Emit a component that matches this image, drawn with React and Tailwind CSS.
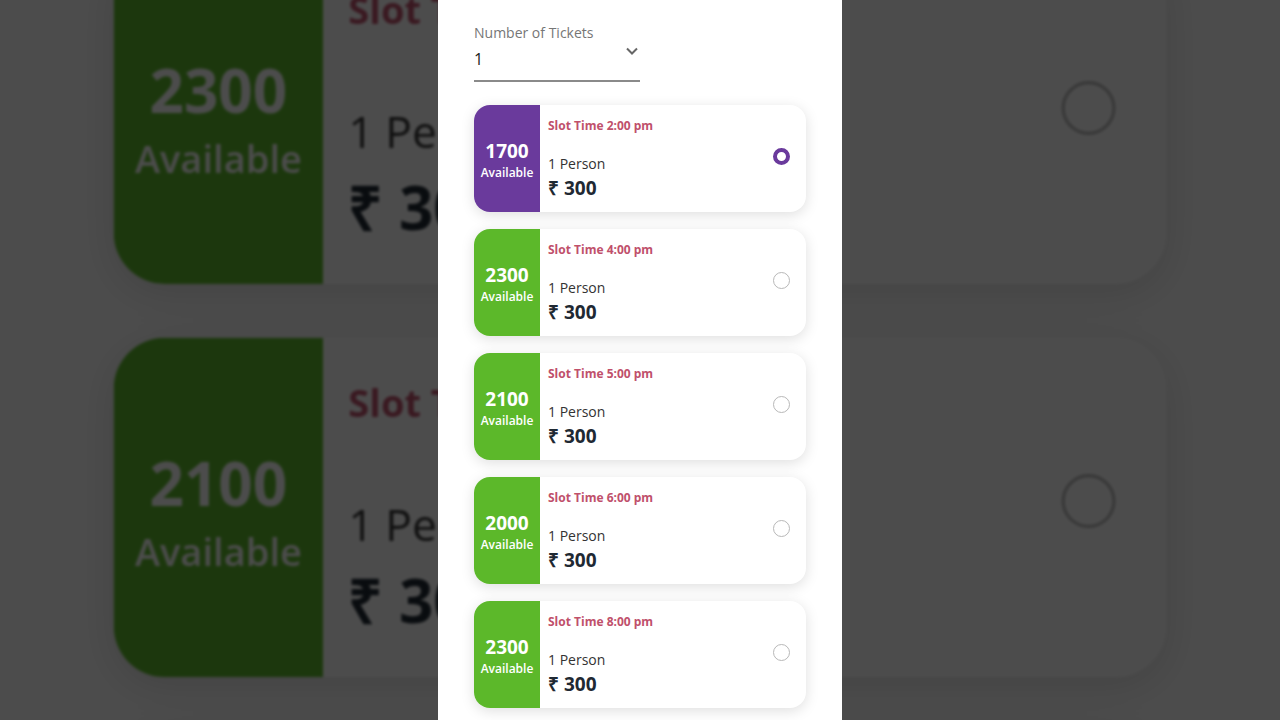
import React from 'react';

const slots = [
    { available: 1700, time: '2:00 pm', selected: true },
    { available: 2300, time: '4:00 pm' },
    { available: 2100, time: '5:00 pm' },
    { available: 2000, time: '6:00 pm' },
    { available: 2300, time: '8:00 pm' },
];

const SlotCard = ({ slot }) => (
    <div className="flex h-[107px] w-[332px] shrink-0 overflow-hidden rounded-[16px] bg-white shadow-[0_3px_14px_rgba(0,0,0,0.13)]">
        <div
            className={`flex w-[66px] shrink-0 flex-col items-center justify-center pt-[3px] text-white ${
                slot.selected ? 'bg-[#6a3a9c]' : 'bg-[#5cb82a]'
            }`}
        >
            <span className="text-[19px] font-bold leading-[22px]">{slot.available}</span>
            <span className="mt-[3px] text-[12px] font-semibold leading-[15px]">Available</span>
        </div>
        <div className="flex flex-1 items-center justify-between pl-[8px] pr-[16px]">
            <div className="flex flex-col self-stretch pt-[13px]">
                <span className="text-[12px] font-bold leading-[16px] text-[#c0506b]">Slot Time {slot.time}</span>
                <span className="mt-[20px] text-[14px] leading-[20px] text-[#333]">1 Person</span>
                <span className="mt-[2px] text-[19px] font-bold leading-[24px] text-[#1f2933]">₹ 300</span>
            </div>
            {slot.selected ? (
                <span className="-mt-[5px] h-[17px] w-[17px] rounded-full border-[4px] border-[#6a3a9c] bg-white" />
            ) : (
                <span className="-mt-[5px] h-[17px] w-[17px] rounded-full border border-[#b8b8b8] bg-white" />
            )}
        </div>
    </div>
);

const TicketPanel = () => (
    <div className="h-[720px] w-[404px] shrink-0 overflow-hidden bg-white px-[36px] pt-[23px] font-['Open_Sans',sans-serif]">
        {/* ticket count select */}
        <div className="w-[166px] border-b-2 border-[#8a8a8a] pb-[9px]">
            <div className="text-[14px] leading-[20px] text-[#767676]">Number of Tickets</div>
            <div className="mt-[4px] flex items-start justify-between">
                <span className="text-[16px] leading-[24px] text-[#222]">1</span>
                <svg width="14" height="9" viewBox="0 0 14 9" className="mr-[1px]">
                    <path d="M2 1.5 L7 6.5 L12 1.5" fill="none" stroke="#666" strokeWidth="2" />
                </svg>
            </div>
        </div>

        <div className="mt-[23px] flex flex-col gap-[17px]">
            {slots.map((slot, i) => (
                <SlotCard key={i} slot={slot} />
            ))}
        </div>
    </div>
);

const App = () => {
    return (
        <div className="relative flex h-[720px] w-[1280px] justify-center overflow-hidden bg-[#4a4a4a]">
            {/* zoomed, dimmed backdrop */}
            <div aria-hidden="true" className="absolute inset-0 flex justify-center blur-[1.5px] brightness-[0.3]">
                <div className="scale-[3.17]">
                    <TicketPanel />
                </div>
            </div>
            <div className="relative">
                <TicketPanel />
            </div>
        </div>
    );
};

export default App;
